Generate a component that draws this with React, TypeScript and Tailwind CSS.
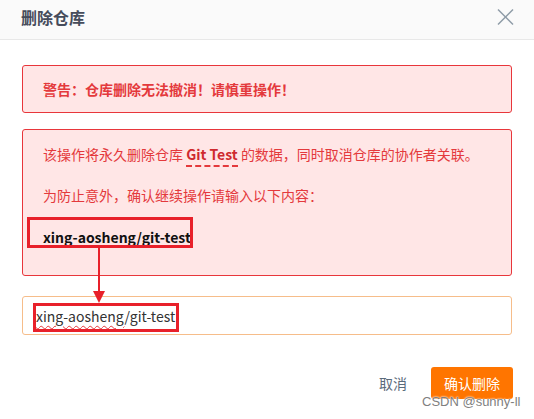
import React from "react";

export default function App() {
  const font = { fontFamily: '"Noto Sans CJK SC", "Noto Sans", sans-serif' };
  return (
    <div className="relative w-[534px] h-[419px] bg-white overflow-hidden" style={font}>
      {/* header */}
      <div className="h-[40px] bg-[#fafafa] border-b border-[#e8e8e8] flex items-center justify-between pl-[21px] pr-[20px] pb-[5px]">
        <span className="text-[16px] font-bold text-[#464c5b] leading-[20px]">删除仓库</span>
        <svg width="17" height="16" viewBox="0 0 17 16" className="mt-[-1px]">
          <line x1="1" y1="0.5" x2="16" y2="15.5" stroke="#8d9aa6" strokeWidth="1.4" />
          <line x1="16" y1="0.5" x2="1" y2="15.5" stroke="#8d9aa6" strokeWidth="1.4" />
        </svg>
      </div>

      <div className="px-[22px] pt-[25px]">
        {/* warning box */}
        <div className="h-[48px] border border-[#e8363b] bg-[#ffe6e6] rounded-[3px] flex items-center pl-[20px]">
          <span className="text-[14px] font-bold text-[#e4393c] leading-[20px]">
            警告：仓库删除无法撤消！请慎重操作！
          </span>
        </div>

        {/* info box */}
        <div className="mt-[16px] h-[147px] border border-[#e8363b] bg-[#ffe6e6] rounded-[3px] pl-[20px] pt-[14px]">
          <div className="text-[14px] text-[#e4393c] leading-[20px] whitespace-nowrap">
            该操作将永久删除仓库{" "}
            <span className="font-bold text-[#cf2a2f] border-b-2 border-dashed border-[#e4393c] pb-[1px]">
              Git Test
            </span>{" "}
            的数据，同时取消仓库的协作者关联。
          </div>
          <div className="mt-[21px] text-[14px] text-[#e4393c] leading-[20px]">
            为防止意外，确认继续操作请输入以下内容：
          </div>
          <div className="mt-[19px]">
            <span className="inline-block text-[14px] font-bold text-[#111] leading-[18px] border-b-2 border-dashed border-[#e4393c]">
              xing-aosheng/git-test
            </span>
          </div>
        </div>

        {/* input */}
        <div className="mt-[20px] h-[39px] border border-[#f6bd8a] rounded-[3px] flex items-center pl-[13px]">
          <span className="text-[14px] text-[#333] leading-[20px]">
            <span className="underline decoration-wavy decoration-[#e4393c] decoration-1 underline-offset-[3px]">
              xing-aosheng
            </span>
            /git-test
          </span>
          <span className="w-px h-[17px] bg-[#111] ml-[1px]" />
        </div>

        {/* footer */}
        <div className="mt-[32px] flex items-center justify-end pr-[-1px] mr-[-1px]">
          <span className="text-[14px] text-[#5b6b7b] leading-[20px] mr-[24px]">取消</span>
          <div className="w-[82px] h-[32px] bg-[#ff7500] rounded-[3px] flex items-center justify-center text-[14px] text-white leading-[20px]">
            确认删除
          </div>
        </div>
      </div>

      {/* annotations */}
      <div className="absolute left-[27px] top-[217px] w-[166px] h-[31px] border-[3px] border-[#e8202a]" />
      <div className="absolute left-[33px] top-[303px] w-[146px] h-[29px] border-[3px] border-[#e8202a]" />
      <svg className="absolute left-[90px] top-[246px]" width="18" height="60" viewBox="0 0 18 60">
        <line x1="9" y1="0" x2="9" y2="48" stroke="#e8202a" strokeWidth="2" />
        <polygon points="3,45 15,45 9,57" fill="#e8202a" />
      </svg>

      {/* watermark */}
      <div
        className="absolute left-[422px] top-[393px] text-[13px] leading-[18px] text-[#7f7f7f] [text-shadow:0_0_2px_#fff,0_0_2px_#fff]"
        style={{ fontFamily: '"Liberation Sans", Arial, sans-serif' }}
      >
        CSDN @sunny-ll
      </div>
    </div>
  );
}
